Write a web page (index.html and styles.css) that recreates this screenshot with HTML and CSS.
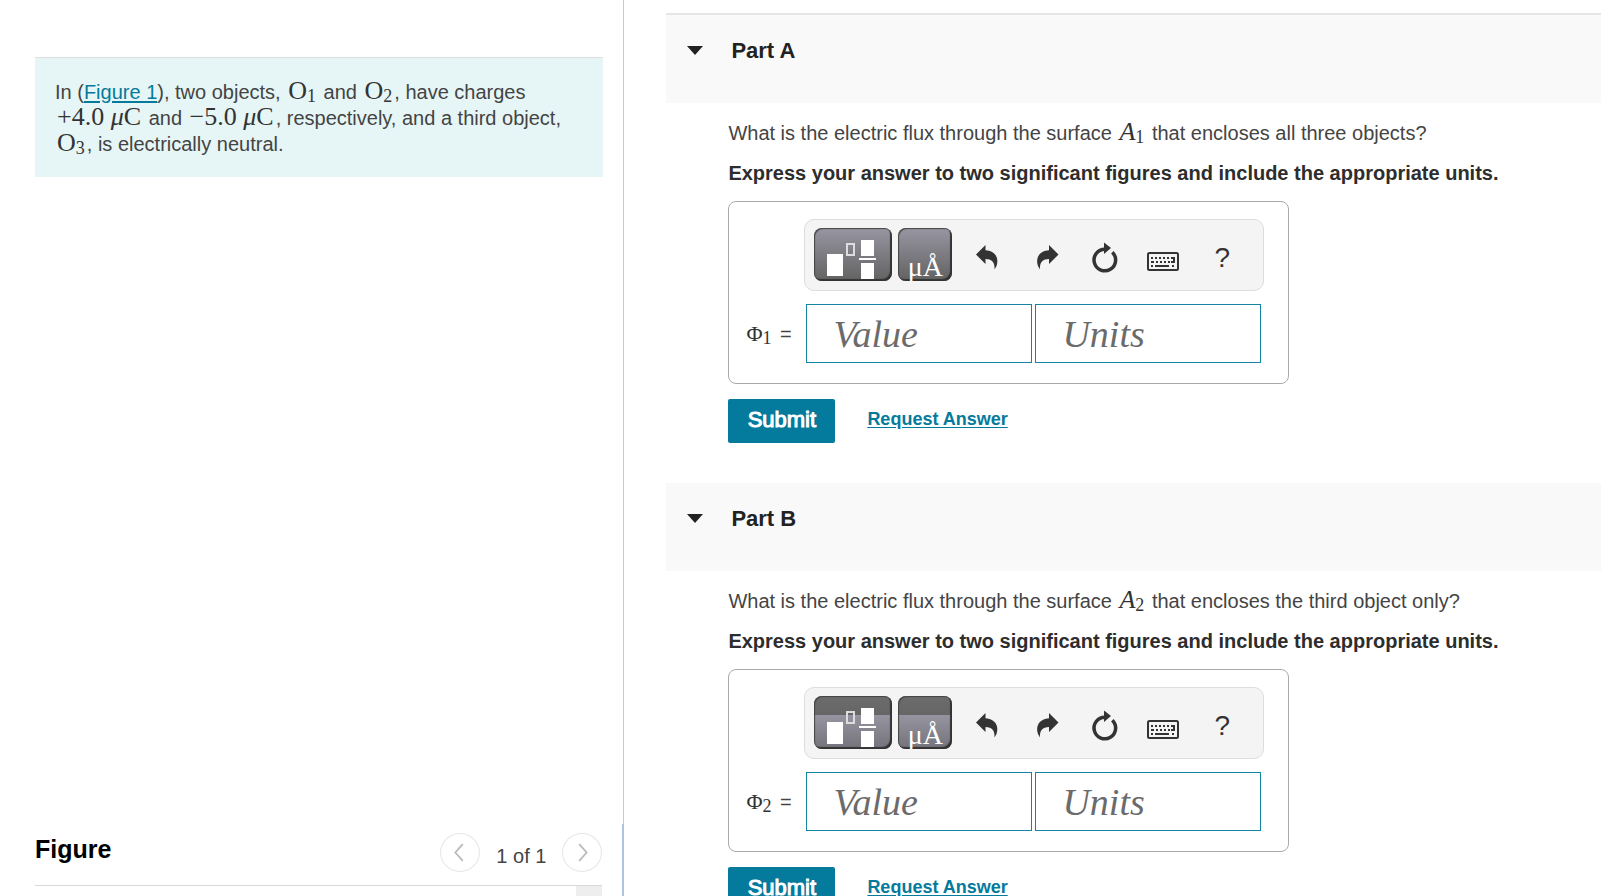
FILE: index.html
```
<!DOCTYPE html>
<html lang="en">
  <head>
    <title>Electric flux</title>
    <meta charset="utf-8">
    <meta name="viewport" content="width=device-width, initial-scale=1">
    <link rel="stylesheet" href="styles.css">
  </head>
<body>
<!-- icons shared by both answer toolbars -->
<svg class="sprite" aria-hidden="true">
  <symbol id="template" viewBox="0 0 78 53">
    <path fill="#fff" d="M13 26h16v22H13zM47 12h13v16H47zM45 30h17v2H45zM47 35h13v16H47z"/>
    <path fill="none" stroke="#ddd" stroke-width="2" d="M33 16h7v11h-7z"/>
  </symbol>
  <symbol id="undo" viewBox="0 0 58 53">
    <path fill="#333" d="M18 26.500L27.500 17v5.200C36.500 22.500 41.500 29.500 38.500 38L36.500 41.500C37 34.500 34 31 27.500 31v5z"/>
  </symbol>
  <symbol id="redo" viewBox="0 0 58 53">
    <path fill="#333" d="M42.500 26.500L33 17v5.200C24 22.500 19 29.500 22 38L24 41.500C23.500 34.500 26.500 31 33 31v5z"/>
  </symbol>
  <symbol id="reset" viewBox="0 0 58 53">
    <path fill="none" stroke="#333" stroke-width="3.500" d="M38.300 24.200A10.800 10.800 0 1 1 30.800 21.200"/>
    <path fill="#333" d="M30 14.500l7 5.500L30 26z"/>
  </symbol>
  <symbol id="keyboard" viewBox="0 0 58 53">
    <rect x="16" y="25" width="30" height="17" rx="1.500" fill="none" stroke="#333" stroke-width="2"/>
    <path stroke="#333" stroke-width="2" d="M19 30h2m2 0h2m2 0h2m2 0h2m2 0h2m2 0h2M19 34h3m2 0h2m2 0h2m2 0h2m2 0h2m1 0h3M19 38h2m2 0h14m3 0h2"/>
    <path fill="#333" d="M41 29h2v6h-4v-2h2z"/>
  </symbol>
</svg>

<div class="page">
  <div class="left">
    <div class="problem">
      <div class="intro">
        In (<a href="#figure">Figure 1</a>), two objects, <span class="math">O<sub>1</sub></span> and <span class="math">O<sub>2</sub></span>, have charges <span class="math">+4.0 <i>μ</i>C</span> and <span class="math">−5.0 <i>μ</i>C</span>, respectively, and a third object, <span class="math">O<sub>3</sub></span>, is electrically neutral.
      </div>
    </div>
    <div class="figure" id="figure">
      <div class="figure-head">
        <h2>Figure</h2>
        <div class="pager">
          <button class="round" aria-label="Previous figure"><svg viewBox="0 0 40 40"><path d="M23 11l-8 9 8 9"/></svg></button>
          <span class="count">1 of 1</span>
          <button class="round" aria-label="Next figure"><svg viewBox="0 0 40 40"><path d="M17 11l8 9-8 9"/></svg></button>
        </div>
      </div>
      <div class="figure-body"><div class="scroll"></div></div>
    </div>
  </div>

  <div class="right">
    <section class="part">
      <div class="part-head first">
        <button class="toggle" aria-label="Toggle Part A"></button>
        <h2>Part A</h2>
      </div>
      <div class="part-body">
        <p class="question">What is the electric flux through the surface <span class="math"><i>A</i><sub>1</sub></span> that encloses all three objects?</p>
        <p class="hint">Express your answer to two significant figures and include the appropriate units.</p>
        <form class="answer">
          <div class="toolbar">
            <button type="button" class="dark wide" aria-label="Templates"><svg><use href="#template"/></svg></button>
            <button type="button" class="dark">μÅ</button>
            <button type="button" class="icon" aria-label="Undo"><svg><use href="#undo"/></svg></button>
            <button type="button" class="icon" aria-label="Redo"><svg><use href="#redo"/></svg></button>
            <button type="button" class="icon" aria-label="Reset"><svg><use href="#reset"/></svg></button>
            <button type="button" class="icon" aria-label="Keyboard"><svg><use href="#keyboard"/></svg></button>
            <button type="button" class="icon help">?</button>
          </div>
          <label class="symbol" for="value-a"><span class="phi">Φ<sub>1</sub></span> =</label>
          <div class="fields">
            <input id="value-a" type="text" placeholder="Value">
            <input id="units-a" type="text" placeholder="Units" aria-label="Units">
          </div>
        </form>
        <div class="actions">
          <button class="submit">Submit</button>
          <a class="request" href="#">Request Answer</a>
        </div>
      </div>
    </section>

    <section class="part">
      <div class="part-head">
        <button class="toggle" aria-label="Toggle Part B"></button>
        <h2>Part B</h2>
      </div>
      <div class="part-body">
        <p class="question">What is the electric flux through the surface <span class="math"><i>A</i><sub>2</sub></span> that encloses the third object only?</p>
        <p class="hint">Express your answer to two significant figures and include the appropriate units.</p>
        <form class="answer">
          <div class="toolbar">
            <button type="button" class="dark banded wide" aria-label="Templates"><svg><use href="#template"/></svg></button>
            <button type="button" class="dark banded">μÅ</button>
            <button type="button" class="icon" aria-label="Undo"><svg><use href="#undo"/></svg></button>
            <button type="button" class="icon" aria-label="Redo"><svg><use href="#redo"/></svg></button>
            <button type="button" class="icon" aria-label="Reset"><svg><use href="#reset"/></svg></button>
            <button type="button" class="icon" aria-label="Keyboard"><svg><use href="#keyboard"/></svg></button>
            <button type="button" class="icon help">?</button>
          </div>
          <label class="symbol" for="value-b"><span class="phi">Φ<sub>2</sub></span> =</label>
          <div class="fields">
            <input id="value-b" type="text" placeholder="Value">
            <input id="units-b" type="text" placeholder="Units" aria-label="Units">
          </div>
        </form>
        <div class="actions">
          <button class="submit">Submit</button>
          <a class="request" href="#">Request Answer</a>
        </div>
      </div>
    </section>
  </div>
</div>
</body>
</html>
```
FILE: styles.css
```
* {
  box-sizing: border-box;
}
body {
  font-family: "Liberation Sans", Arial, sans-serif;
  font-size: 20px;
  color: #444;
  background-color: #fff;
  margin: 0;
}
h2, p {
  margin: 0;
}
button {
  font-family: inherit;
  border: 0;
  padding: 0;
  background: none;
  cursor: pointer;
}
a {
  color: #047a9c;
  text-underline-offset: 2px;
}
sub {
  font-size: 18px;
  line-height: 0;
  vertical-align: -3px;
}
.sprite {
  display: none;
}
.page {
  display: grid;
  grid-template-columns: 39% 1fr;
  height: 100vh;
  overflow: hidden;
}
.left {
  display: flex;
  flex-direction: column;
  min-height: 0;
}
.problem {
  flex: 1;
  padding: 57px 20px 0 35px;
  border-right: 1px solid #bccbe2;
}
.intro {
  padding: 21px 16px 20px 20px;
  line-height: 26px;
  border-top: 1px solid #d9e0df;
  background: #e6f6f6;
}
.math {
  margin: 0 2px;
  font-family: "Liberation Serif", "Times New Roman", serif;
  font-size: 26px;
  line-height: 20px;
  color: #333;
  white-space: nowrap;
}

.figure {
  padding: 9px 20px 0 35px;
  border-right: 2px solid #adc4e0;
}
.figure-head {
  display: flex;
  justify-content: space-between;
  height: 53px;
  border-bottom: 1px solid #d8d8d8;
}
.figure-head h2 {
  font-size: 25px;
  line-height: 32px;
  color: #000;
}
.pager {
  display: flex;
  gap: 16px;
}
.round {
  width: 40px;
  height: 39px;
  border: 1px solid #e6e6e6;
  border-radius: 50%;
}
.round svg {
  display: block;
  width: 100%;
  height: 100%;
  fill: none;
  stroke: #bbb;
  stroke-width: 2;
}
.count {
  line-height: 46px;
}
.figure-body {
  display: flex;
  justify-content: flex-end;
}
.scroll {
  width: 26px;
  height: 10px;
  background: #eee;
}

.right {
  padding: 13px 0 0 42px;
  overflow: hidden;
}
.part-head {
  display: flex;
  align-items: flex-start;
  gap: 28px;
  height: 88px;
  padding: 23px 21px;
  background: #f9f9f9;
}
.part-head.first {
  height: 90px;
  border-top: 2px solid #e6e6e6;
}
.part-head h2 {
  font-size: 22px;
  line-height: 26px;
  color: #222;
}
.toggle {
  border: 8px solid transparent;
  border-top: 9px solid #222;
  border-bottom: 0;
  margin-top: 8px;
}
.part-body {
  padding: 0 20px 40px 62px;
}
.question {
  padding-top: 15px;
  line-height: 30px;
}
.hint {
  padding: 10px 0 13px;
  line-height: 30px;
  font-weight: bold;
  color: #2d2d2d;
}
.answer {
  display: grid;
  grid-template-columns: 75px 460px;
  row-gap: 13px;
  width: max-content;
  padding: 17px 24px 19px 0;
  border: 1px solid #aaa;
  border-radius: 8px;
}
.toolbar {
  grid-column: 2;
  display: flex;
  height: 72px;
  padding: 8px 9px;
  border: 1px solid #ddd;
  border-radius: 10px;
  background: #f4f4f4;
}
.toolbar svg {
  display: block;
  width: 100%;
  height: 100%;
}
.dark {
  width: 54px;
  height: 53px;
  margin-right: 6px;
  overflow: hidden;
  font-family: "Liberation Serif", "Times New Roman", serif;
  font-size: 28px;
  line-height: 53px;
  padding-top: 12px;
  color: #fff;
  border-radius: 8px;
  background: linear-gradient(#9896a2, #626262);
  box-shadow: inset -2px -2px 1px #333, inset 1px 1px 1px #444;
}
.dark.wide {
  width: 78px;
  padding: 0;
}
.dark.banded {
  background: linear-gradient(#6c6c6c, #666 35%, #9694a0 36%, #74737a);
}
.icon {
  width: 58px;
  height: 53px;
  font-size: 28px;
  color: #333;
}
.icon.help {
  padding: 6px 0 0 6px;
}
.symbol {
  padding-left: 17px;
  line-height: 60px;
  font-size: 20px;
  white-space: nowrap;
}
.phi {
  margin-right: 3px;
  font-family: "Liberation Serif", "Times New Roman", serif;
  font-size: 22px;
  color: #333;
}
.fields {
  display: flex;
  gap: 3px;
  padding: 0 3px 0 2px;
}
.fields input {
  flex: 1;
  min-width: 0;
  height: 59px;
  padding: 0 26px;
  font-family: "Liberation Serif", "Times New Roman", serif;
  font-size: 38px;
  font-style: italic;
  border: 1px solid #1484a4;
  outline: 0;
}
.fields input::placeholder {
  color: #6b6b6b;
}
.actions {
  display: flex;
  align-items: flex-start;
  gap: 32px;
  padding-top: 15px;
}
.submit {
  width: 107px;
  height: 44px;
  font-size: 22px;
  line-height: 42px;
  padding-bottom: 2px;
  color: #fff;
  border-radius: 2px;
  background: #047a9c;
  -webkit-text-stroke: 1px #fff;
}
.request {
  font-size: 18px;
  font-weight: bold;
  line-height: 40px;
}
```
